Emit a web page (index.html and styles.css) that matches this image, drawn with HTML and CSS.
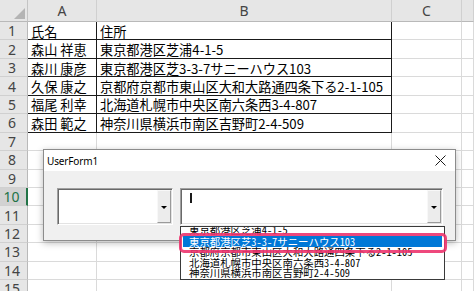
FILE: index.html
```html
<!DOCTYPE html>
<html lang="ja">
<head>
<meta charset="utf-8">
<title>UserForm1</title>
<link rel="stylesheet" href="styles.css">
</head>
<body>
<div class="sheet">
  <div class="corner"><svg class="tri" width="28" height="22" viewBox="0 0 28 22"><polygon points="25,8 25,19 14,19" fill="#b4b4b4"/></svg></div>
  <div class="colh">A</div><div class="colh">B</div><div class="colh">C</div><div class="colh"></div>

  <div class="rowh">1</div><div class="cell tb">氏名</div><div class="cell tb">住所</div><div class="cell"></div><div class="cell"></div>
  <div class="rowh">2</div><div class="cell tb">森山 祥恵</div><div class="cell tb">東京都港区芝浦4-1-5</div><div class="cell"></div><div class="cell"></div>
  <div class="rowh">3</div><div class="cell tb">森川 康彦</div><div class="cell tb">東京都港区芝3-3-7サニーハウス103</div><div class="cell"></div><div class="cell"></div>
  <div class="rowh">4</div><div class="cell tb">久保 康之</div><div class="cell tb">京都府京都市東山区大和大路通四条下る2-1-105</div><div class="cell"></div><div class="cell"></div>
  <div class="rowh">5</div><div class="cell tb">福尾 利幸</div><div class="cell tb">北海道札幌市中央区南六条西3-4-807</div><div class="cell"></div><div class="cell"></div>
  <div class="rowh">6</div><div class="cell tb">森田 範之</div><div class="cell tb">神奈川県横浜市南区吉野町2-4-509</div><div class="cell"></div><div class="cell"></div>
  <div class="rowh">7</div><div class="cell"></div><div class="cell"></div><div class="cell"></div><div class="cell"></div>
  <div class="rowh">8</div><div class="cell"></div><div class="cell"></div><div class="cell"></div><div class="cell"></div>
  <div class="rowh">9</div><div class="cell"></div><div class="cell"></div><div class="cell"></div><div class="cell"></div>
  <div class="rowh active">10</div><div class="cell"></div><div class="cell"></div><div class="cell"></div><div class="cell"></div>
  <div class="rowh">11</div><div class="cell"></div><div class="cell"></div><div class="cell"></div><div class="cell"></div>
  <div class="rowh">12</div><div class="cell"></div><div class="cell"></div><div class="cell"></div><div class="cell"></div>
  <div class="rowh">13</div><div class="cell"></div><div class="cell"></div><div class="cell"></div><div class="cell"></div>
  <div class="rowh">14</div><div class="cell"></div><div class="cell"></div><div class="cell"></div><div class="cell"></div>
  <div class="rowh">15</div><div class="cell"></div><div class="cell"></div><div class="cell"></div><div class="cell"></div>
</div>

<div class="form">
  <div class="titlebar">
    <span class="title">UserForm1</span>
    <svg class="close" width="11" height="11" viewBox="0 0 11 11"><path d="M0.5 0.5 L10.5 10.5 M10.5 0.5 L0.5 10.5" stroke="#1a1a1a" stroke-width="1" fill="none"/></svg>
  </div>
  <div class="formbody">
    <div class="combo combo1">
      <div class="field"></div>
      <div class="btn"><span class="arrow"></span></div>
    </div>
    <div class="combo combo2">
      <div class="field"><span class="caret"></span></div>
      <div class="btn"><span class="arrow"></span></div>
    </div>
  </div>
</div>

<div class="list">
  <div class="item first">東京都港区芝浦4-1-5</div>
  <div class="item sel">東京都港区芝3-3-7サニーハウス103</div>
  <div class="item">京都府京都市東山区大和大路通四条下る2-1-105</div>
  <div class="item">北海道札幌市中央区南六条西3-4-807</div>
  <div class="item">神奈川県横浜市南区吉野町2-4-509</div>
</div>

<div class="mark"></div>
</body>
</html>
```
FILE: styles.css
```css
html, body {
  margin: 0;
  padding: 0;
  width: 474px;
  height: 291px;
  overflow: hidden;
  background: #ffffff;
}

.sheet {
  display: grid;
  grid-template-columns: 28px 69px 295px 70px 12px;
  grid-template-rows: 22px repeat(15, 18.45px);
  font-family: "Noto Sans CJK JP", "Noto Sans", sans-serif;
}

.corner {
  background: #e6e6e6;
  border-right: 1px solid #c4c4c4;
  border-bottom: 1px solid #b9b9b9;
  box-sizing: border-box;
  position: relative;
}
.tri {
  position: absolute;
  left: 0;
  top: 0;
}

.colh {
  background: #e6e6e6;
  border-right: 1px solid #d0d0d0;
  border-bottom: 1px solid #b9b9b9;
  box-sizing: border-box;
  display: flex;
  align-items: center;
  justify-content: center;
  font-size: 14px;
  color: #444444;
  font-family: "Noto Sans", sans-serif;
}

.rowh {
  background: #e6e6e6;
  border-right: 1px solid #b9b9b9;
  border-bottom: 1px solid #d0d0d0;
  box-sizing: border-box;
  display: flex;
  align-items: center;
  justify-content: center;
  font-size: 14px;
  color: #444444;
  font-family: "Noto Sans", sans-serif;
  padding-right: 3px;
}
.rowh.active {
  background: #d2d2d2;
  color: #217346;
  border-right: 2px solid #217346;
}

.cell {
  border-right: 1px solid #dadada;
  border-bottom: 1px solid #dadada;
  box-sizing: border-box;
  display: flex;
  align-items: center;
  padding-left: 3px;
  padding-top: 1px;
  font-size: 13.2px;
  color: #000000;
  white-space: nowrap;
  overflow: hidden;
}
.cell.tb {
  border-right-color: #1a1a1a;
  border-bottom-color: #1a1a1a;
}

/* UserForm */
.form {
  position: absolute;
  left: 43px;
  top: 149px;
  width: 413px;
  height: 92px;
  box-sizing: border-box;
  border: 1px solid #8c8c8c;
  background: #f0f0f0;
  box-shadow: 0 2px 7px rgba(0, 0, 0, 0.28);
  display: flex;
  flex-direction: column;
}
.titlebar {
  height: 21px;
  background: #ffffff;
  display: flex;
  align-items: center;
  justify-content: space-between;
  padding: 0 9px 0 3px;
}
.title {
  font-family: "Noto Sans", sans-serif;
  font-size: 10px;
  letter-spacing: -0.15px;
  color: #000000;
}
.formbody {
  flex: 1;
  display: flex;
  gap: 7px;
  padding: 17px 0 0 13px;
}

.combo {
  height: 37px;
  box-sizing: border-box;
  border-top: 1px solid #a0a0a0;
  border-left: 1px solid #a0a0a0;
  border-right: 1px solid #ffffff;
  border-bottom: 1px solid #ffffff;
  box-shadow: inset 1px 1px 0 #696969, inset -1px -1px 0 #e3e3e3;
  background: #ffffff;
  display: flex;
  padding: 1px;
}
.combo1 { width: 116px; }
.combo2 { width: 263px; }

.field {
  flex: 1;
  position: relative;
}
.caret {
  display: block;
  width: 2px;
  height: 10px;
  background: #1a1a1a;
  margin: 3px 0 0 8px;
}

.btn {
  width: 14px;
  background: #ececec;
  box-sizing: border-box;
  border-left: 1px solid #f8f8f8;
  border-top: 1px solid #f8f8f8;
  border-right: 1px solid #9a9a9a;
  border-bottom: 1px solid #9a9a9a;
  display: flex;
  align-items: center;
  justify-content: center;
}
.arrow {
  width: 0;
  height: 0;
  border-left: 3px solid transparent;
  border-right: 3px solid transparent;
  border-top: 3px solid #000000;
  margin-top: 2px;
}

/* Dropdown list */
.list {
  position: absolute;
  left: 180px;
  top: 226px;
  width: 265px;
  height: 54px;
  box-sizing: border-box;
  border: 1px solid #3a3a3a;
  background: #ffffff;
  overflow: hidden;
  font-family: "Noto Sans Mono CJK JP", "Noto Sans CJK JP", monospace;
  font-size: 10.4px;
  color: #000000;
}
.item {
  height: 10.6px;
  line-height: 10.6px;
  padding-left: 8px;
  white-space: nowrap;
}
.item.first {
  margin-top: -2px;
}
.item.sel {
  background: #0078d7;
  color: #ffffff;
  margin: 0 2px;
  padding-left: 6px;
  height: 11.6px;
  line-height: 11.6px;
}

.mark {
  position: absolute;
  left: 179px;
  top: 233px;
  width: 268px;
  height: 20px;
  box-sizing: border-box;
  border: 3px solid rgba(236, 52, 110, 0.9);
  border-radius: 5px;
}
```
